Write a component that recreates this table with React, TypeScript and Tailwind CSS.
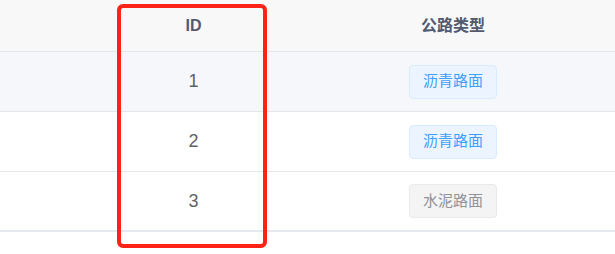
const rows = [
  { id: 1, type: "沥青路面", tone: "blue" },
  { id: 2, type: "沥青路面", tone: "blue" },
  { id: 3, type: "水泥路面", tone: "gray" },
];

export default function App() {
  return (
    <div
      className="relative w-[615px] h-[254px] bg-white overflow-hidden"
      style={{ fontFamily: '"Liberation Sans", "Noto Sans CJK SC", sans-serif' }}
    >
      {/* Header */}
      <div className="grid grid-cols-[64px_259px_260px_1fr] h-[52px] bg-[#f8f8f9] border-b border-[#e3e6eb] text-[16px] font-bold text-[#515a6e]">
        <div />
        <div className="flex items-center justify-center">ID</div>
        <div className="flex items-center justify-center">公路类型</div>
        <div />
      </div>

      {/* Body */}
      {rows.map((r, i) => (
        <div
          key={r.id}
          className={`grid grid-cols-[64px_259px_260px_1fr] h-[60px] ${
            i === 0 ? "bg-[#f5f7fa]" : "bg-white"
          } ${i === rows.length - 1 ? "border-b-2 border-[#e6e8f0]" : "border-b border-[#e3e6eb]"}`}
        >
          <div />
          <div className="flex items-center justify-center text-[18px] text-[#606266]">{r.id}</div>
          <div className="flex items-center justify-center">
            {r.tone === "blue" ? (
              <span className="h-[34px] px-[13px] flex items-center rounded-[4px] border border-[#d9ecff] bg-[#ecf5ff] text-[15px] text-[#409eff]">
                {r.type}
              </span>
            ) : (
              <span className="h-[34px] px-[13px] flex items-center rounded-[4px] border border-[#e9e9eb] bg-[#f4f4f5] text-[15px] text-[#909399]">
                {r.type}
              </span>
            )}
          </div>
          <div />
        </div>
      ))}

      {/* annotation box */}
      <div className="absolute left-[117px] top-[4px] w-[150px] h-[244px] border-4 border-[#ff2216] rounded-[6px]" />
    </div>
  );
}
